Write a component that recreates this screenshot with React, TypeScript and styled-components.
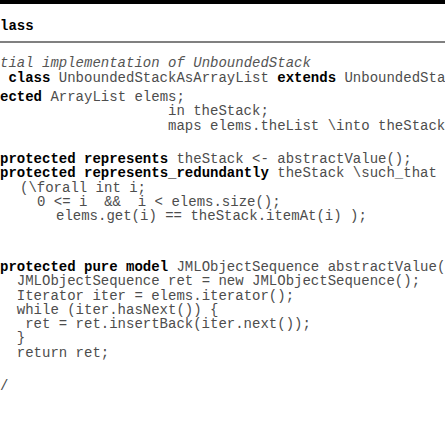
import React from "react";
import styled, { createGlobalStyle } from "styled-components";

const Global = createGlobalStyle`
  html, body { margin: 0; padding: 0; background: #ffffff; }
  body { font-family: "Liberation Mono", "Courier New", monospace; }
`;

const Page = styled.div`
  width: 445px;
  height: 445px;
  overflow: hidden;
  background: #ffffff;
  display: flex;
  flex-direction: column;
`;

const TopBar = styled.div`
  height: 4px;
  flex: none;
  background: #000000;
`;

const Title = styled.h1`
  margin: 15px 0 0 0;
  font-family: "Liberation Mono", "Courier New", monospace;
  font-size: 14px;
  line-height: 14.3px;
  font-weight: bold;
  color: #000000;
  white-space: pre;
`;

const Rule = styled.hr`
  margin: 7.7px 0 0 0;
  border: none;
  height: 2.5px;
  background: #808080;
  flex: none;
`;

const Code = styled.pre`
  margin: 0;
  font-family: "Liberation Mono", "Courier New", monospace;
  font-size: 14px;
  line-height: 14.3px;
  color: #4d4d4d;
`;

const Line = styled.div<{ $indent?: number; $gap?: number }>`
  white-space: pre;
  margin-left: ${(p) => p.$indent ?? 0}px;
  margin-top: ${(p) => p.$gap ?? 0}px;
  height: 14.3px;
`;

const Kw = styled.b`
  font-weight: bold;
  color: #000000;
`;

const Comment = styled.i`
  font-style: italic;
  color: #555555;
`;

export default function App() {
  return (
    <>
      <Global />
      <Page>
        <TopBar />
        <Title>lass</Title>
        <Rule />
        <Code>
          <Line $gap={12.5}>
            <Comment>tial implementation of UnboundedStack</Comment>
          </Line>
          <Line $gap={0.7} $indent={8.4}>
            <Kw>class</Kw> UnboundedStackAsArrayList <Kw>extends</Kw> UnboundedStack {"{"}
          </Line>
          <Line $gap={4.7}>
            <Kw>ected</Kw> ArrayList elems;
          </Line>
          <Line $indent={168}>in theStack;</Line>
          <Line $indent={168}>maps elems.theList \into theStack;</Line>
          <Line $gap={19.1}>
            <Kw>protected represents</Kw> theStack &lt;- abstractValue();
          </Line>
          <Line>
            <Kw>protected represents_redundantly</Kw> theStack \such_that
          </Line>
          <Line $indent={20}>(\forall int i;</Line>
          <Line $indent={37}>0 &lt;= i  &amp;&amp;  i &lt; elems.size();</Line>
          <Line $indent={56}>elems.get(i) == theStack.itemAt(i) );</Line>
          <Line $gap={36.5}>
            <Kw>protected pure model</Kw> JMLObjectSequence abstractValue() {"{"}
          </Line>
          <Line $indent={16.8}>JMLObjectSequence ret = new JMLObjectSequence();</Line>
          <Line $indent={16.8}>Iterator iter = elems.iterator();</Line>
          <Line $indent={16.8}>while (iter.hasNext()) {"{"}</Line>
          <Line $indent={25.2}>ret = ret.insertBack(iter.next());</Line>
          <Line $indent={16.8}>{"}"}</Line>
          <Line $indent={16.8}>return ret;</Line>
          <Line $gap={18.9} $indent={-8.4}>*/</Line>
        </Code>
      </Page>
    </>
  );
}
